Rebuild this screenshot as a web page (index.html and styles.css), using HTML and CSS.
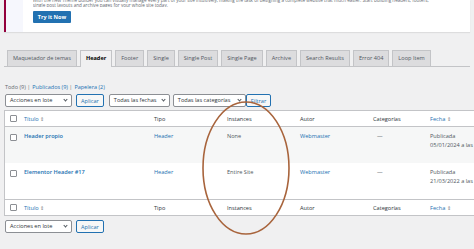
FILE: index.html
```html
<!DOCTYPE html>
<html lang="es">
<head>
    <meta charset="UTF-8">
    <meta name="viewport" content="width=device-width, initial-scale=1.0">
    <title>Maquetador de temas</title>
    <link rel="stylesheet" href="styles.css">
</head>
<body>
    <div class="wrap">
        <div class="notice">
            <div class="notice-icon"></div>
            <div class="notice-body">
                <p>With the new Theme Builder you can visually manage every part of your site intuitively, making the task of designing a complete website that much easier. Start building headers, footers, single post layouts and archive pages for your whole site today.</p>
                <a class="btn-primary" href="#">Try it Now</a>
            </div>
        </div>

        <nav class="tabs">
            <a class="tab" href="#">Maquetador de temas</a>
            <a class="tab active" href="#">Header</a>
            <a class="tab" href="#">Footer</a>
            <a class="tab" href="#">Single</a>
            <a class="tab" href="#">Single Post</a>
            <a class="tab" href="#">Single Page</a>
            <a class="tab" href="#">Archive</a>
            <a class="tab" href="#">Search Results</a>
            <a class="tab" href="#">Error 404</a>
            <a class="tab" href="#">Loop Item</a>
        </nav>

        <ul class="subsubsub">
            <li class="current">Todo <span class="count">(9)</span> |</li>
            <li><a href="#">Publicados <span class="count">(9)</span></a> |</li>
            <li><a href="#">Papelera <span class="count">(2)</span></a></li>
        </ul>

        <div class="tablenav">
            <div class="select w-bulk">Acciones en lote <span class="chev"></span></div>
            <button class="btn">Aplicar</button>
            <div class="select w-dates">Todas las fechas <span class="chev"></span></div>
            <div class="select w-cats">Todas las categorías <span class="chev"></span></div>
            <button class="btn">Filtrar</button>
        </div>

        <div class="table">
            <div class="row head">
                <div class="cell cb"><span class="check"></span></div>
                <div class="cell"><a href="#">Título <span class="sort">&#8661;</span></a></div>
                <div class="cell">Tipo</div>
                <div class="cell">Instances</div>
                <div class="cell">Autor</div>
                <div class="cell">Categorías</div>
                <div class="cell"><a href="#">Fecha <span class="sort">&#8661;</span></a></div>
            </div>
            <div class="row item alt">
                <div class="cell cb"><span class="check"></span></div>
                <div class="cell"><a class="title" href="#">Header propio</a></div>
                <div class="cell"><a href="#">Header</a></div>
                <div class="cell">None</div>
                <div class="cell"><a href="#">Webmaster</a></div>
                <div class="cell dash">—</div>
                <div class="cell date">Publicada<br>05/01/2024 a las</div>
            </div>
            <div class="row item">
                <div class="cell cb"><span class="check"></span></div>
                <div class="cell"><a class="title" href="#">Elementor Header #17</a></div>
                <div class="cell"><a href="#">Header</a></div>
                <div class="cell">Entire Site</div>
                <div class="cell"><a href="#">Webmaster</a></div>
                <div class="cell dash">—</div>
                <div class="cell date">Publicada<br>21/03/2022 a las</div>
            </div>
            <div class="row head foot">
                <div class="cell cb"><span class="check"></span></div>
                <div class="cell"><a href="#">Título <span class="sort">&#8661;</span></a></div>
                <div class="cell">Tipo</div>
                <div class="cell">Instances</div>
                <div class="cell">Autor</div>
                <div class="cell">Categorías</div>
                <div class="cell"><a href="#">Fecha <span class="sort">&#8661;</span></a></div>
            </div>
        </div>

        <div class="tablenav bottom">
            <div class="select w-bulk">Acciones en lote <span class="chev"></span></div>
            <button class="btn">Aplicar</button>
        </div>
    </div>

    <!-- hand-drawn highlight over the Instances column -->
    <svg class="circle" width="474" height="249" viewBox="0 0 474 249">
        <ellipse cx="246" cy="168" rx="43" ry="66" fill="none" stroke="#a8643c" stroke-width="1.6"/>
    </svg>
</body>
</html>
```

FILE: styles.css
```css
* {
    margin: 0;
    padding: 0;
    box-sizing: border-box;
}

body {
    background-color: #f0f0f1;
    font-family: "Open Sans", Arial, sans-serif;
    font-size: 6px;
    color: #3c434a;
    overflow: hidden;
    width: 474px;
    height: 249px;
    position: relative;
}

a {
    color: #2271b1;
    text-decoration: none;
}

.wrap {
    padding: 0 4px;
}

/* notice */
.notice {
    display: flex;
    height: 32px;
    background-color: #fff;
    border-left: 2px solid #93003c;
    box-shadow: 0 1px 1px rgba(0, 0, 0, 0.08);
    overflow: hidden;
}

.notice-icon {
    width: 22px;
    background-color: #f6f7fd;
}

.notice-body {
    padding-left: 10px;
    padding-right: 30px;
}

.notice-body p {
    margin-top: -2px;
    font-size: 4.6px;
    line-height: 4.6px;
    color: #646970;
    height: 9px;
    overflow: hidden;
    -webkit-line-clamp: 2;
    display: -webkit-box;
    -webkit-box-orient: vertical;
}

.btn-primary {
    display: inline-block;
    margin-top: 4px;
    height: 12px;
    padding: 0 5px;
    line-height: 12px;
    background-color: #2271b1;
    color: #fff;
    font-weight: 700;
    font-size: 5.5px;
    border-radius: 1px;
}

/* tabs */
.tabs {
    display: flex;
    align-items: flex-end;
    margin-top: 18px;
    padding-left: 3px;
    border-bottom: 1px solid #c3c4c7;
}

.tab {
    margin-right: 3px;
    padding: 0 5px;
    height: 16px;
    line-height: 15px;
    font-size: 5.6px;
    color: #50575e;
    background-color: #dcdcde;
    border: 1px solid #c3c4c7;
    border-bottom: none;
}

.tab.active {
    background-color: #f0f0f1;
    color: #000;
    font-weight: 700;
    height: 17px;
    margin-bottom: -1px;
}

/* views */
.subsubsub {
    list-style: none;
    display: flex;
    gap: 2px;
    margin-top: 16px;
    padding-left: 1px;
    font-size: 5.5px;
    line-height: 8px;
    color: #646970;
}

/* filters */
.tablenav {
    display: flex;
    align-items: center;
    gap: 4px;
    margin-top: 3px;
    padding-left: 1px;
}

.tablenav.bottom {
    margin-top: 4px;
}

.select {
    position: relative;
    height: 13px;
    line-height: 11px;
    padding: 0 4px;
    font-size: 5.6px;
    color: #2c3338;
    background-color: #fff;
    border: 1px solid #8c8f94;
    border-radius: 2px;
    white-space: nowrap;
}

.chev {
    position: absolute;
    right: 4px;
    top: 3px;
    width: 3px;
    height: 3px;
    border-right: 1px solid #50575e;
    border-bottom: 1px solid #50575e;
    transform: rotate(45deg);
}

.w-bulk { width: 67px; }
.w-dates { width: 61px; margin-left: 1px; }
.w-cats { width: 73px; margin-left: -1px; }

.btn {
    height: 13px;
    padding: 0 4px;
    font-family: inherit;
    font-size: 5.6px;
    color: #2271b1;
    background-color: #f6f7f7;
    border: 1px solid #2271b1;
    border-radius: 2px;
}

.w-cats + .btn {
    margin-left: -4px;
}

/* table */
.table {
    margin-top: 3px;
    width: 500px;
    background-color: #fff;
    border: 1px solid #c3c4c7;
    border-right: none;
}

.row {
    display: grid;
    grid-template-columns: 19px 130px 73px 73px 73px 57px 74px;
}

.row.head {
    height: 16px;
    align-items: center;
    border-bottom: 1px solid #c3c4c7;
    color: #2c3338;
    font-size: 5.6px;
}

.row.foot {
    border-bottom: none;
    border-top: 1px solid #c3c4c7;
}

.row.item {
    height: 36px;
    padding-top: 5px;
    font-size: 5.6px;
    line-height: 9px;
    color: #50575e;
}

.row.alt {
    background-color: #f6f7f7;
}

.cell.cb {
    padding-left: 5px;
    display: flex;
    align-items: center;
}

.row.item .cell.cb {
    align-items: flex-start;
    padding-top: 2px;
}

.check {
    width: 7px;
    height: 7px;
    background-color: #fff;
    border: 1px solid #8c8f94;
    border-radius: 1px;
}

.title {
    font-weight: 600;
}

.dash {
    padding-left: 4px;
}

.sort {
    font-size: 5px;
    color: #787c82;
}

.circle {
    position: absolute;
    left: 0;
    top: 0;
    pointer-events: none;
}
```
